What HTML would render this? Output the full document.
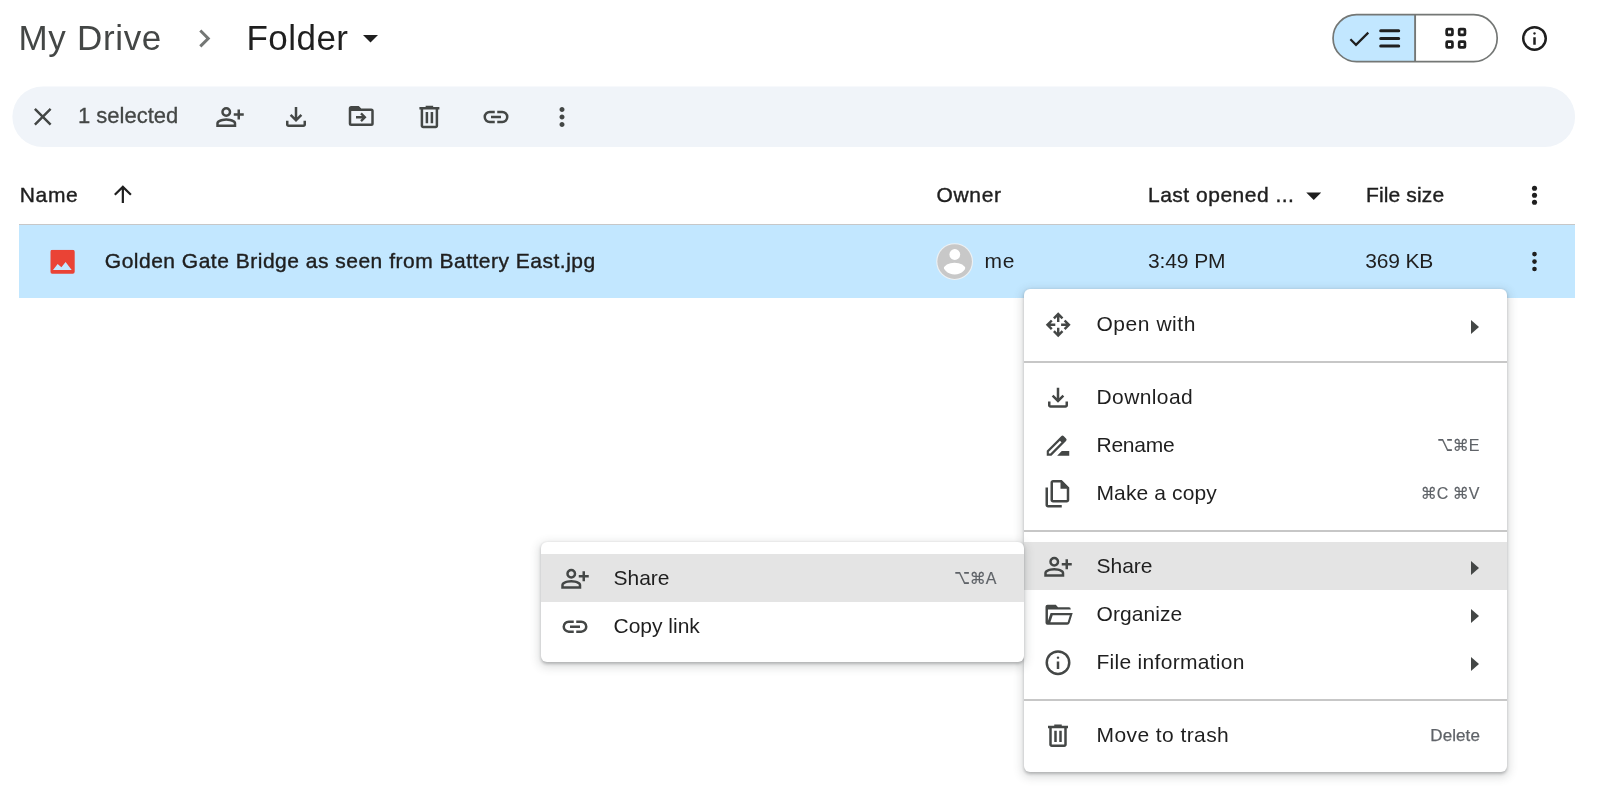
<!DOCTYPE html>
<html lang="en">
<head>
<meta charset="utf-8">
<title>Folder - Google Drive</title>
<style>
html,body{margin:0;padding:0;}
body{width:1600px;height:811px;overflow:hidden;background:#fff;position:relative;
  font-family:"Liberation Sans","DejaVu Sans",sans-serif;color:#1f1f1f;}
*{box-sizing:border-box;}
#root{position:absolute;left:0;top:0;width:1600px;height:811px;overflow:hidden;will-change:transform;}
.abs{position:absolute;}
svg{display:block;}
.t{position:absolute;white-space:nowrap;line-height:1;}

/* breadcrumb */
.crumb{font-size:35px;top:20.4px;}
#c1{left:18.5px;color:#444746;letter-spacing:.68px;}
#c2{left:246.500px;color:#1f1f1f;letter-spacing:.46px;}

/* view toggle */
#toggle{left:1331px;top:13px;width:168px;height:50px;}

/* selection bar */
#selbar{left:13px;top:86px;width:1562px;height:61px;}
#selbar .t{font-size:22px;color:#444746;-webkit-text-stroke:.3px #444746;}

/* table */
.hdr{font-size:21px;color:#1f1f1f;top:184px;-webkit-text-stroke:0.4px #1f1f1f;}
#hline{left:19px;top:224px;width:1556px;height:1px;background:#c7c7c7;}
#row{left:19px;top:225px;width:1556px;height:73px;background:#c2e7ff;}
.cell{font-size:21px;color:#1f1f1f;top:250.200px;}

/* menus */
.menu{background:#fff;border-radius:6px;
  box-shadow:0 3px 9px 3px rgba(60,64,67,.15),0 1.5px 3px 0 rgba(60,64,67,.3);}
#ctx{left:1024px;top:289px;width:483px;height:483px;}
#sub{left:541px;top:542px;width:483px;height:120px;}
.mi{position:absolute;left:0;width:100%;height:48px;}
.mi.hl{background:#e4e4e4;}
.mi .ic{position:absolute;left:19px;top:9px;transform:translateY(.700px);width:30px;height:30px;}
.mi .lb{position:absolute;left:72.500px;top:13px;font-size:21px;line-height:1;color:#1f1f1f;white-space:nowrap;}
.mi .sc{position:absolute;right:27.500px;top:17px;font-size:16px;line-height:1;color:#5f6368;-webkit-text-stroke:.15px #5f6368;white-space:nowrap;font-family:"Liberation Sans","DejaVu Sans",sans-serif;}
.sc .o{display:inline-block;transform:scale(.84,1.3);transform-origin:50% 72%;margin:0 -1.400px;}
.mi .ar{position:absolute;right:27.800px;top:18.600px;width:0;height:0;border-left:8.200px solid #444746;border-top:7.400px solid transparent;border-bottom:7.400px solid transparent;}
.sep{position:absolute;left:0;width:100%;height:1.5px;background:#c7c7c7;}
</style>
</head>
<body>
<div id="root">

<!-- breadcrumb -->
<div class="t crumb" id="c1">My Drive</div>
<svg class="abs" style="left:0;top:0;transform:translate(187.250px,20.400px)" width="36" height="36" viewBox="0 -960 960 960"><path fill="#747775" d="M504-480 320-664l56-56 240 240-240 240-56-56 184-184Z"/></svg>
<div class="t crumb" id="c2">Folder</div>
<svg class="abs" style="left:0;top:0;transform:translate(352.500px,20px)" width="36" height="36" viewBox="0 -960 960 960"><path fill="#1f1f1f" d="M480-360 280-560h400L480-360Z"/></svg>

<!-- view toggle -->
<div class="abs" id="toggle">
  <svg class="abs" style="left:0;top:0;transform:translate(0px,0px)" width="168" height="50" viewBox="0 0 168 50">
    <defs><clipPath id="tcl"><rect x="0" y="0" width="84.100" height="50"/></clipPath></defs>
    <rect x="2.050" y="1.700" width="164.150" height="46.900" rx="23.450" fill="#c2e7ff" clip-path="url(#tcl)"/>
    <rect x="2.050" y="1.700" width="164.150" height="46.900" rx="23.450" fill="none" stroke="#747775" stroke-width="1.700"/>
    <path stroke="#747775" stroke-width="1.900" d="M84.100 1.700V48.600"/>
    <path fill="none" stroke="#1f1f1f" stroke-width="2.200" d="M19.400 26.300 25 31.900 37.300 19.600"/>
    <path fill="none" stroke="#1f1f1f" stroke-width="3" stroke-linecap="round" d="M49.700 17.700H67.700M49.700 25.400H67.700M49.700 32.900H67.700"/>
    <g fill="none" stroke="#1f1f1f" stroke-width="2.700">
      <rect x="115.650" y="16.150" width="5.800" height="5.800" rx="1"/><rect x="128.150" y="16.150" width="5.800" height="5.800" rx="1"/>
      <rect x="115.650" y="28.650" width="5.800" height="5.800" rx="1"/><rect x="128.150" y="28.650" width="5.800" height="5.800" rx="1"/>
    </g>
  </svg>
</div>
<svg class="abs" style="left:0;top:0;transform:translate(1519.500px,23.400px)" width="30" height="30" viewBox="0 -960 960 960"><path fill="#1f1f1f" d="M440-280h80v-240h-80v240Zm40-320q17 0 28.500-11.500T520-640q0-17-11.500-28.500T480-680q-17 0-28.500 11.500T440-640q0 17 11.500 28.500T480-600Zm0 520q-83 0-156-31.500T197-197q-54-54-85.500-127T80-480q0-83 31.500-156T197-763q54-54 127-85.500T480-880q83 0 156 31.500T763-763q54 54 85.500 127T880-480q0 83-31.500 156T763-197q-54 54-127 85.500T480-80Zm0-80q134 0 227-93t93-227q0-134-93-227t-227-93q-134 0-227 93t-93 227q0 134 93 227t227 93Z"/></svg>

<!-- selection bar -->
<div class="abs" id="selbar">
  <svg class="abs" style="left:0;top:0;transform:translate(-3px,-2px)" width="1570" height="66" viewBox="0 0 1570 66"><rect x="2.400" y="2.500" width="1562.700" height="60.600" rx="30.300" fill="#f0f4f9"/></svg>
  <svg class="abs" style="left:0;top:0;transform:translate(14.750px,15.850px)" width="30" height="30" viewBox="0 -960 960 960"><path fill="#444746" d="m256-200-56-56 224-224-224-224 56-56 224 224 224-224 56 56-224 224 224 224-56 56-224-224-224 224Z"/></svg>
  <div class="t" style="left:65px;top:19px">1 selected</div>
  <svg class="abs" style="left:0;top:0;transform:translate(202px,16px)" width="30" height="30" viewBox="0 -960 960 960"><path fill="#444746" d="M720-400v-120H600v-80h120v-120h80v120h120v80H800v120h-80Zm-360-80q-66 0-113-47t-47-113q0-66 47-113t113-47q66 0 113 47t47 113q0 66-47 113t-113 47ZM40-160v-112q0-34 17.500-62.500T104-378q62-31 126-46.500T360-440q66 0 130 15.500T616-378q29 15 46.500 43.500T680-272v112H40Zm80-80h480v-32q0-11-5.500-20T580-306q-54-27-109-40.500T360-360q-56 0-111 13.500T140-306q-9 5-14.500 14t-5.500 20v32Zm240-320q33 0 56.500-23.500T440-640q0-33-23.500-56.500T360-720q-33 0-56.500 23.500T280-640q0 33 23.500 56.500T360-560Z"/></svg>
  <svg class="abs" style="left:0;top:0;transform:translate(268px,16px)" width="30" height="30" viewBox="0 -960 960 960"><path fill="#444746" d="M480-320 280-520l56-58 104 104v-326h80v326l104-104 56 58-200 200ZM240-160q-33 0-56.500-23.500T160-240v-120h80v120h480v-120h80v120q0 33-23.500 56.500T720-160H240Z"/></svg>
  <svg class="abs" style="left:0;top:0;transform:translate(333.250px,15px)" width="30" height="30" viewBox="0 0 30 30"><path fill="#444746" fill-rule="evenodd" d="M5 25Q2.500 25 2.500 22.500V7.500Q2.500 5 5 5H12.500L15 7.500H25Q27.500 7.500 27.500 10V22.500Q27.500 25 25 25ZM5 10V22.500H25V10Z"/><path fill="none" stroke="#444746" stroke-width="2.300" d="M9.750 16.250H18.600M14.750 12.350 18.650 16.250 14.750 20.150"/></svg>
  <svg class="abs" style="left:0;top:0;transform:translate(401.400px,16px)" width="30" height="30" viewBox="0 -960 960 960"><path fill="#444746" d="M280-120q-33 0-56.500-23.500T200-200v-520h-40v-80h200v-40h240v40h200v80h-40v520q0 33-23.500 56.500T680-120H280Zm400-600H280v520h400v-520ZM360-280h80v-360h-80v360Zm160 0h80v-360h-80v360Z"/></svg>
  <svg class="abs" style="left:0;top:0;transform:translate(468px,16px)" width="30" height="30" viewBox="0 -960 960 960"><path fill="#444746" d="M440-280H280q-83 0-141.500-58.500T80-480q0-83 58.500-141.500T280-680h160v80H280q-50 0-85 35t-35 85q0 50 35 85t85 35h160v80ZM320-440v-80h320v80H320Zm200 160v-80h160q50 0 85-35t35-85q0-50-35-85t-85-35H520v-80h160q83 0 141.500 58.500T880-480q0 83-58.500 141.500T680-280H520Z"/></svg>
  <svg class="abs" style="left:0;top:0;transform:translate(534px,16px)" width="30" height="30" viewBox="0 -960 960 960"><path fill="#444746" d="M480-160q-33 0-56.500-23.500T400-240q0-33 23.500-56.500T480-320q33 0 56.500 23.500T560-240q0 33-23.500 56.500T480-160Zm0-240q-33 0-56.500-23.500T400-480q0-33 23.500-56.500T480-560q33 0 56.500 23.500T560-480q0 33-23.500 56.500T480-400Zm0-240q-33 0-56.500-23.500T400-720q0-33 23.500-56.500T480-800q33 0 56.500 23.500T560-720q0 33-23.500 56.500T480-640Z"/></svg>
</div>

<!-- table header -->
<div class="t hdr" style="left:19.800px;letter-spacing:.65px">Name</div>
<svg class="abs" style="left:0;top:0;transform:translate(109.600px,180.800px)" width="26.500" height="26.500" viewBox="0 -960 960 960"><path fill="#1f1f1f" d="M440-160v-487L216-423l-56-57 320-320 320 320-56 57-224-224v487h-80Z"/></svg>
<div class="t hdr" style="left:936.500px;letter-spacing:.68px">Owner</div>
<div class="t hdr" style="left:1148px;letter-spacing:.5px">Last opened ...</div>
<svg class="abs" style="left:0;top:0;transform:translate(1295.750px,177.500px)" width="36" height="36" viewBox="0 -960 960 960"><path fill="#1f1f1f" d="M480-360 280-560h400L480-360Z"/></svg>
<div class="t hdr" style="left:1366px;letter-spacing:.13px">File size</div>
<svg class="abs" style="left:0;top:0;transform:translate(1524.500px,180px)" width="20" height="30" viewBox="0 0 20 30"><g fill="#1f1f1f"><circle cx="10" cy="8.300" r="2.550"/><circle cx="10" cy="15.300" r="2.550"/><circle cx="10" cy="22.200" r="2.550"/></g></svg>
<div class="abs" id="hline"></div>

<!-- selected row -->
<div class="abs" id="row"></div>
<svg class="abs" style="left:0;top:0;transform:translate(50.300px,249.700px)" width="25" height="25" viewBox="0 0 25 25"><path fill="#ea4335" fill-rule="evenodd" d="M2 0H22.400Q24.400 0 24.400 2V22Q24.400 24 22.400 24H2Q0 24 0 22V2Q0 0 2 0ZM2.700 20.300H21.400L15.300 12.400 11.100 17.600 7.350 14.300Z"/></svg>
<div class="t cell" style="left:104.800px;letter-spacing:.5px;-webkit-text-stroke:0.4px #1f1f1f;">Golden Gate Bridge as seen from Battery East.jpg</div>
<svg class="abs" style="left:0;top:0;transform:translate(935.650px,242.600px)" width="38" height="38" viewBox="0 0 38 38"><defs><clipPath id="avc"><circle cx="19" cy="19" r="12.800"/></clipPath></defs><circle cx="19" cy="19" r="18.400" fill="#eef1f3"/><circle cx="19" cy="19" r="17.300" fill="#c8c8c8"/><circle cx="19.150" cy="11.900" r="5.400" fill="#fff"/><ellipse cx="18.900" cy="26.500" rx="10.800" ry="6.400" fill="#fff" clip-path="url(#avc)"/></svg>
<div class="t cell" style="left:984.600px;letter-spacing:.65px">me</div>
<div class="t cell" style="left:1148px;letter-spacing:-.11px">3:49 PM</div>
<div class="t cell" style="left:1365.200px;letter-spacing:-.17px">369 KB</div>
<svg class="abs" style="left:0;top:0;transform:translate(1524.500px,246px)" width="20" height="30" viewBox="0 0 20 30"><g fill="#1f1f1f"><circle cx="10" cy="8.100" r="2.300"/><circle cx="10" cy="15.600" r="2.300"/><circle cx="10" cy="23" r="2.300"/></g></svg>

<!-- context menu -->
<div class="abs menu" id="ctx">
  <div class="mi" style="top:12px"><svg class="ic" style="transform:translate(.2px,-.2px)" viewBox="-15 -15 30 30"><g fill="none" stroke="#444746" stroke-width="2.450"><path id="ow" d="M-4.300-6.400 0-10.700 4.300-6.400M0-10.500V-2.900"/><path d="M-4.300-6.400 0-10.700 4.300-6.400M0-10.500V-2.900" transform="rotate(90)"/><path d="M-4.300-6.400 0-10.700 4.300-6.400M0-10.500V-2.900" transform="rotate(180)"/><path d="M-4.300-6.400 0-10.700 4.300-6.400M0-10.500V-2.900" transform="rotate(270)"/></g></svg><div class="lb" style="letter-spacing:0.54px;top:12px">Open with</div><div class="ar"></div></div>
  <div class="sep" style="top:72px"></div>
  <div class="mi" style="top:84px"><svg class="ic" viewBox="0 -960 960 960"><path fill="#444746" d="M480-320 280-520l56-58 104 104v-326h80v326l104-104 56 58-200 200ZM240-160q-33 0-56.500-23.500T160-240v-120h80v120h480v-120h80v120q0 33-23.500 56.500T720-160H240Z"/></svg><div class="lb" style="letter-spacing:0.4px">Download</div></div>
  <div class="mi" style="top:132px"><svg class="ic" viewBox="0 0 24 24"><path fill="#444746" fill-rule="evenodd" d="M11.300 20 15 16.300H21V20ZM3 16V20H6.750L18.415 8.335Q19.475 7.275 18.415 6.215L16.660 4.460Q15.600 3.400 14.540 4.460ZM4.700 16.930V18.200H5.920L14.810 9.310 13.565 8.065Z"/></svg><div class="lb" style="letter-spacing:-0.25px">Rename</div><div class="sc"><span class="o">⌥</span>⌘E</div></div>
  <div class="mi" style="top:180px"><svg class="ic" viewBox="0 -960 960 960"><path fill="#444746" d="M760-200H320q-33 0-56.500-23.500T240-280v-560q0-33 23.500-56.500T320-920h280l240 240v400q0 33-23.500 56.500T760-200ZM560-640v-200H320v560h440v-360H560ZM160-40q-33 0-56.500-23.500T80-120v-560h80v560h440v80H160Z"/></svg><div class="lb" style="letter-spacing:0.13px">Make a copy</div><div class="sc">⌘C ⌘V</div></div>
  <div class="sep" style="top:241px"></div>
  <div class="mi hl" style="top:253px"><svg class="ic" viewBox="0 -960 960 960"><path fill="#444746" d="M720-400v-120H600v-80h120v-120h80v120h120v80H800v120h-80Zm-360-80q-66 0-113-47t-47-113q0-66 47-113t113-47q66 0 113 47t47 113q0 66-47 113t-113 47ZM40-160v-112q0-34 17.500-62.500T104-378q62-31 126-46.500T360-440q66 0 130 15.500T616-378q29 15 46.500 43.500T680-272v112H40Zm80-80h480v-32q0-11-5.500-20T580-306q-54-27-109-40.500T360-360q-56 0-111 13.500T140-306q-9 5-14.500 14t-5.500 20v32Zm240-320q33 0 56.500-23.500T440-640q0-33-23.500-56.500T360-720q-33 0-56.500 23.500T280-640q0 33 23.500 56.500T360-560Z"/></svg><div class="lb">Share</div><div class="ar"></div></div>
  <div class="mi" style="top:301px"><svg class="ic" viewBox="0 0 30 30"><path fill="#444746" fill-rule="evenodd" d="M4.500 25Q2.500 25 2.500 23V7Q2.500 5 4.500 5H12.800L15 7.600H26Q27.800 7.600 27.800 9.900H4.950V21L7.600 13.300H29.700L26.600 23.300Q26 25 24.200 25ZM9.700 15.600H26.850L24.650 22.600H7.350Z"/></svg><div class="lb" style="letter-spacing:0.06px">Organize</div><div class="ar"></div></div>
  <div class="mi" style="top:349px"><svg class="ic" viewBox="0 -960 960 960"><path fill="#444746" d="M440-280h80v-240h-80v240Zm40-320q17 0 28.500-11.500T520-640q0-17-11.500-28.500T480-680q-17 0-28.500 11.500T440-640q0 17 11.500 28.500T480-600Zm0 520q-83 0-156-31.500T197-197q-54-54-85.500-127T80-480q0-83 31.500-156T197-763q54-54 127-85.500T480-880q83 0 156 31.500T763-763q54 54 85.500 127T880-480q0 83-31.500 156T763-197q-54 54-127 85.500T480-80Zm0-80q134 0 227-93t93-227q0-134-93-227t-227-93q-134 0-227 93t-93 227q0 134 93 227t227 93Z"/></svg><div class="lb" style="letter-spacing:0.29px">File information</div><div class="ar"></div></div>
  <div class="sep" style="top:410px"></div>
  <div class="mi" style="top:422px"><svg class="ic" viewBox="0 -960 960 960"><path fill="#444746" d="M280-120q-33 0-56.500-23.500T200-200v-520h-40v-80h200v-40h240v40h200v80h-40v520q0 33-23.500 56.500T680-120H280Zm400-600H280v520h400v-520ZM360-280h80v-360h-80v360Zm160 0h80v-360h-80v360Z"/></svg><div class="lb" style="letter-spacing:0.42px">Move to trash</div><div class="sc" style="font-size:17px;top:15.500px;right:27px;letter-spacing:.1px;-webkit-text-stroke:.25px #5f6368">Delete</div></div>
</div>

<!-- share submenu -->
<div class="abs menu" id="sub">
  <div class="mi hl" style="top:12px"><svg class="ic" viewBox="0 -960 960 960"><path fill="#444746" d="M720-400v-120H600v-80h120v-120h80v120h120v80H800v120h-80Zm-360-80q-66 0-113-47t-47-113q0-66 47-113t113-47q66 0 113 47t47 113q0 66-47 113t-113 47ZM40-160v-112q0-34 17.500-62.500T104-378q62-31 126-46.500T360-440q66 0 130 15.500T616-378q29 15 46.500 43.500T680-272v112H40Zm80-80h480v-32q0-11-5.500-20T580-306q-54-27-109-40.500T360-360q-56 0-111 13.500T140-306q-9 5-14.500 14t-5.500 20v32Zm240-320q33 0 56.500-23.500T440-640q0-33-23.500-56.500T360-720q-33 0-56.500 23.500T280-640q0 33 23.500 56.500T360-560Z"/></svg><div class="lb">Share</div><div class="sc"><span class="o">⌥</span>⌘A</div></div>
  <div class="mi" style="top:60px"><svg class="ic" viewBox="0 -960 960 960"><path fill="#444746" d="M440-280H280q-83 0-141.500-58.500T80-480q0-83 58.500-141.500T280-680h160v80H280q-50 0-85 35t-35 85q0 50 35 85t85 35h160v80ZM320-440v-80h320v80H320Zm200 160v-80h160q50 0 85-35t35-85q0-50-35-85t-85-35H520v-80h160q83 0 141.500 58.500T880-480q0 83-58.500 141.500T680-280H520Z"/></svg><div class="lb" style="letter-spacing:0px">Copy link</div></div>
</div>

</div>
</body>
</html>
